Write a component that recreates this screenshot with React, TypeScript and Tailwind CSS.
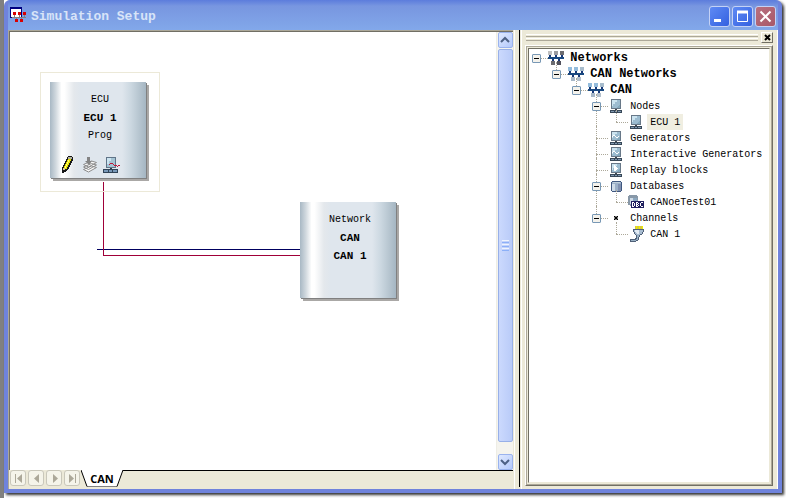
import type { ReactNode } from 'react';

type IconName = 'bus-dark' | 'bus' | 'node' | 'wave' | 'play' | 'database' | 'dbc' | 'dot' | 'plug';

interface TreeItem {
  label: string;
  icon: IconName;
  bold?: boolean;
  selected?: boolean;
  children?: TreeItem[];
}

const TREE: TreeItem[] = [
  {
    label: 'Networks',
    icon: 'bus-dark',
    bold: true,
    children: [
      {
        label: 'CAN Networks',
        icon: 'bus',
        bold: true,
        children: [
          {
            label: 'CAN',
            icon: 'bus',
            bold: true,
            children: [
              { label: 'Nodes', icon: 'node', children: [{ label: 'ECU 1', icon: 'node', selected: true }] },
              { label: 'Generators', icon: 'wave' },
              { label: 'Interactive Generators', icon: 'wave' },
              { label: 'Replay blocks', icon: 'play' },
              { label: 'Databases', icon: 'database', children: [{ label: 'CANoeTest01', icon: 'dbc' }] },
              { label: 'Channels', icon: 'dot', children: [{ label: 'CAN 1', icon: 'plug' }] },
            ],
          },
        ],
      },
    ],
  },
];

function BusIcon({ dark = false }: { dark?: boolean }) {
  const top = dark ? ['#c0c0c0', '#9c9ca0', '#6c6c70'] : ['#94bcdc', '#94bcdc', '#a8bccc'];
  const bottom = dark ? ['#6c6c70', '#50505c'] : ['#a8b8c8', '#b4c0cc'];
  return (
    <>
      <path d="M1 5h2v2H1zM7 5h2v2H7zM13 5h2v2h-2z" fill="#183878" />
      <path d="M0 7h16v2H0z" fill="#184880" />
      <path d="M4 9h2v2H4zM10 9h2v2h-2z" fill="#183878" />
      <path d="M0 1h4v4H0z" fill={top[0]} />
      <path d="M6 1h4v4H6z" fill={top[1]} />
      <path d="M12 1h4v4h-4z" fill={top[2]} />
      <path d="M3 11h4v4H3z" fill={bottom[0]} />
      <path d="M9 11h4v4H9z" fill={bottom[1]} />
    </>
  );
}

function Monitor({ children }: { children?: ReactNode }) {
  return (
    <>
      <path d="M3 1h10v10H3z" fill="#687888" />
      <path d="M4 2h8v8H4z" fill="#9cbcd0" />
      <path d="M4 2h5v2H7v2H5v2H4z" fill="#cce4f0" />
      <path d="M9 10h3V7h-1v1h-1v1H9z" fill="#84a8bc" />
      <path d="M7 11h2v2H7z" fill="#404850" />
      <path d="M2 12h12v3H2z" fill="#384858" />
      <path d="M3 13h3v1H3zM7 13h2v1H7zM10 13h3v1h-3z" fill="#8098b0" />
      {children}
    </>
  );
}

function TreeIcon({ name }: { name: IconName }) {
  return (
    <svg width="16" height="16" viewBox="0 0 16 16" fill="none" shapeRendering="crispEdges" className="shrink-0" aria-hidden="true">
      {name === 'bus-dark' && <BusIcon dark />}
      {name === 'bus' && <BusIcon />}
      {name === 'node' && <Monitor />}
      {name === 'wave' && (
        <Monitor>
          <path d="M4 6h1v1H4zM5 5h2v1H5zM7 6h1v1H7zM8 7h2v1H8zM10 6h1v1h-1z" fill="#fff" />
        </Monitor>
      )}
      {name === 'play' && (
        <Monitor>
          <path d="M6 3h1v1h1v1h1v1h1v1H9v1H8v1H6z" fill="#fff" />
        </Monitor>
      )}
      {name === 'database' && (
        <>
          <path d="M4 3h9v1h1v9h-1v1H4v-1H3V4h1z" fill="#405880" />
          <path d="M4 4h9v9H4z" fill="#9cb0c8" />
          <path d="M4 6h3v7H4z" fill="#d0dce8" />
          <path d="M10 6h3v7h-3z" fill="#8090b0" />
          <path d="M5 4h7v1H5z" fill="#c0d0dc" />
        </>
      )}
      {name === 'dbc' && (
        <>
          <path d="M1 1h8v1h1v9H9v1H2v-1H0V2h1z" fill="#8898a8" />
          <path d="M2 4h3v6H2z" fill="#d0dce8" />
          <path d="M5 4h4v6H5z" fill="#8ca8c0" />
          <path d="M3 7h13v7H3z" fill="#202060" />
          <path d="M4 8h2v1H5v3h1v1H4zM6 9h1v3H6z" fill="#fff" />
          <path d="M8 8h2v1H9v1h1v1H9v1h1v1H8zM10 9h1v1h-1zM10 11h1v1h-1z" fill="#fff" />
          <path d="M12 9h1v3h-1zM13 8h2v1h-2zM13 12h2v1h-2z" fill="#fff" />
        </>
      )}
      {name === 'dot' && (
        <>
          <path d="M6 6h4v4H6z" fill="#808080" />
          <path d="M6 6h1v1H6zM9 6h1v1H9zM7 7h2v2H7zM6 9h1v1H6zM9 9h1v1H9z" fill="#000" />
        </>
      )}
      {name === 'plug' && (
        <>
          <path d="M7 0h8v4H7z" fill="#d8c840" />
          <path d="M8 0h1v3H8zM11 0h1v3h-1zM14 0h1v3h-1z" fill="#f0f000" />
          <path d="M5 3h11v3h-1v2h-1v1h-2v2h-1v3h-1v1H8v1H2v-3h5v-1h1V9H7V8H6V6H5z" fill="#506078" />
          <path d="M6 4h9v2h-1v2h-2v1H8V8H7V6H6z" fill="#a8bcd0" />
          <path d="M7 4h4v4H9V7H8V6H7z" fill="#e4ecf4" />
          <path d="M3 14h5v-1h1V9h2v2h-1v3H8v1H3z" fill="#98b0c4" />
        </>
      )}
    </svg>
  );
}

function TreeRow({ item, depth, last }: { item: TreeItem; depth: number; last: boolean }) {
  const open = Boolean(item.children);
  return (
    <li className="relative">
      {/* Dotted branch lines */}
      {depth > 0 && (
        <span
          className={`absolute -top-1 left-1 w-0 border-l border-dotted border-[#aca899] ${last ? 'h-3' : 'h-full'}`}
        />
      )}
      <div className="flex h-4 items-center">
        <span className="relative flex w-4 shrink-0 items-center">
          <span className={`absolute right-0 border-t border-dotted border-[#aca899] ${open ? 'left-2' : 'left-1'}`} />
          {open && (
            <button
              aria-label={`Collapse ${item.label}`}
              className="relative flex size-[9px] items-center justify-center rounded-[1px] border border-[#7898b5] bg-[#f4f2ec]"
            >
              <span className="h-px w-[5px] bg-black" />
            </button>
          )}
        </span>
        <TreeIcon name={item.icon} />
        <span
          className={`ml-[3px] flex h-4 items-center whitespace-nowrap px-[3px] ${item.bold ? 'text-[12px] font-bold' : 'text-[10px]'} ${item.selected ? 'bg-[#f0eee1]' : ''}`}
        >
          {item.label}
        </span>
      </div>
      {item.children && (
        <ul className="ml-5">
          {item.children.map((child, i) => (
            <TreeRow key={child.label} item={child} depth={depth + 1} last={i === item.children!.length - 1} />
          ))}
        </ul>
      )}
    </li>
  );
}

const CARD =
  'absolute flex size-24 flex-col bg-[linear-gradient(90deg,#a8b8c4_0%,#d0d8de_6%,#fff_12%,#fff_15%,#e4e8ec_25%,#dfe6ed_32%,#dfe6ed_75%,#ccd8e1_84%,#a5b6c2_100%)] shadow-[1px_1px_0_#808080,3px_3px_0_#aaa8a6] pt-[9px] text-[10px] leading-[18px]';

interface CardLine {
  text: string;
  bold?: boolean;
}

function CardLines({ lines }: { lines: CardLine[] }) {
  return lines.map(line => (
    <span key={line.text} className={`pl-1 text-center ${line.bold ? 'text-[11px] font-bold' : ''}`}>
      {line.text}
    </span>
  ));
}

function CardIcons() {
  return (
    <div className="mt-auto mb-1 flex items-end gap-1.5 pl-2" aria-hidden="true">
      <svg width="16" height="18" viewBox="0 0 16 18" shapeRendering="crispEdges">
        <path d="M10 0h4v1h1v4h-1v2h-1v2h-1v2h-1v2h-1v1H9v1H8v1H6v1H4v-6h1V9h1V7h1V5h1V3h1V1h1z" fill="#181818" />
        <path d="M10 3h3v2h-1v2h-1v2h-1v2H9v2H7v-1H6v-2h1V8h1V6h1V4h1z" fill="#e8e000" />
        <path d="M10 4h1v2h-1v2H9v2H8v2H7v-2h1V8h1V6h1z" fill="#ffff70" />
        <path d="M10 1h4v2h-4z" fill="#b0b0a0" />
        <path d="M5 12h2v2H5z" fill="#d8c8a0" />
      </svg>
      <svg width="18" height="18" viewBox="0 0 18 18" fill="none" className="-mr-0.5">
        <path
          d="M3.500 13.500l8-3.500 5 1.500-8 4.500zM3.500 11l8-3.500 5 1.500-8 4.500zM3.500 8.500l8-3.500 5 1.500-8 4.500z"
          fill="#f8f8f8"
          stroke="#8c8c8c"
        />
        <path d="M7 1h3v4h2l-3 4-4-4h2z" fill="#848484" />
      </svg>
      <svg width="18" height="18" viewBox="0 0 18 18" fill="none" shapeRendering="crispEdges">
        <path d="M4 1h10v11H4z" fill="#607488" />
        <path d="M5 2h8v9H5z" fill="#a4c4d4" />
        <path d="M5 2h4v3H7v3H5z" fill="#cce4f0" />
        <path d="M8 12h2v2H8z" fill="#303840" />
        <path d="M1 13h15v4H1z" fill="#304458" />
        <path d="M2 14h4v2H2zM7 14h3v2H7zM11 14h4v2h-4z" fill="#7898b8" />
        <path d="M7 8h1v1H7zM8 7h3v1H8zM11 8h1v1h-1zM12 9h3v1h-3zM15 10h1v1h-1zM16 9h2v1h-2z" fill="#c01838" />
      </svg>
    </div>
  );
}

const NAV_BUTTONS = [
  { label: 'First tab', d: 'M4 3h1v9H4zM11 3v9L6 7.500z' },
  { label: 'Previous tab', d: 'M10 3v9L5 7.500z' },
  { label: 'Next tab', d: 'M6 3v9l5-4.500z' },
  { label: 'Last tab', d: 'M4 3v9l5-4.500zM10 3h1v9h-1z' },
];

function SheetTabs() {
  return (
    <div className="flex h-[18px] shrink-0 items-stretch bg-[#ece9d8]">
      <div className="flex gap-0.5 px-px">
        {NAV_BUTTONS.map(b => (
          <button
            key={b.label}
            aria-label={b.label}
            className="flex size-4 items-center justify-center rounded-[3px] border border-[#c9c7ba] bg-[#f5f4ea]"
          >
            <svg width="15" height="15" viewBox="0 0 15 15" fill="#aca899" className="shrink-0">
              <path d={b.d} />
            </svg>
          </button>
        ))}
      </div>
      <button className="relative w-[42px] font-['Open_Sans',sans-serif] text-[11px] leading-4 font-bold">
        <svg width="42" height="17" viewBox="0 0 42 17" className="absolute left-0 top-0" fill="none" aria-hidden="true">
          <path d="M0 0L6 16.500H36L42 0z" fill="#fff" />
          <path d="M6 16.500H36" stroke="#808080" />
          <path d="M0 0L6 16.500M36 16.500L42 0" stroke="#000" />
        </svg>
        <span className="relative">CAN</span>
      </button>
      <div className="flex-1 border-t border-black" />
    </div>
  );
}

function ScrollButton({ label, d }: { label: string; d: string }) {
  return (
    <button
      aria-label={label}
      className="flex h-4 w-[15px] shrink-0 items-center justify-center rounded-[2px] border border-[#9ab3ee] bg-linear-to-br from-[#dfe9ff] to-[#b4c9fb]"
    >
      <svg width="10" height="8" viewBox="0 0 10 8" fill="none" stroke="#4d6185" strokeWidth="2">
        <path d={d} />
      </svg>
    </button>
  );
}

function TitleButton({ label, className, children }: { label: string; className: string; children: ReactNode }) {
  return (
    <button
      aria-label={label}
      className={`flex size-[21px] items-center justify-center rounded-[3px] border border-[#c4d2f6] ${className}`}
    >
      <svg width="19" height="19" viewBox="0 0 19 19" fill="none" stroke="#fff" className="shrink-0">
        {children}
      </svg>
    </button>
  );
}

export default function App() {
  return (
    <div className="flex min-h-screen border-l-4 border-[#808080] bg-white pr-1 pb-[5px] font-['Liberation_Mono',monospace] text-black">
      <div className="flex min-w-0 flex-1 flex-col rounded-t-[6px] border-x-4 border-b-4 border-[#6f83dc] bg-[#7b98e0] shadow-[2px_2px_3px_#303030]">
        {/* Title bar */}
        <header className="flex h-[30px] shrink-0 items-center rounded-t-[3px] bg-linear-to-b from-[#5c7cdc] via-[#7896e0] via-20% to-[#82a8ea] pt-0.5 pr-0.5">
          <svg width="18" height="18" viewBox="0 0 18 18" shapeRendering="crispEdges" className="ml-0.5" aria-hidden="true">
            <path d="M0 0h12v11H0z" fill="#000080" />
            <path d="M1 2h10v8H1z" fill="#fff" />
            <path d="M2 10h14v1H2zM4 8h1v2H4zM9 8h1v2H9zM14 8h1v2h-1zM6 11h1v2H6zM11 11h1v2h-1z" fill="#808080" />
            <path d="M3 5h3v3H3zM8 5h3v3H8zM13 5h3v3h-3zM5 12h3v3H5zM10 12h3v3h-3z" fill="#d80000" />
          </svg>
          <h1 className="ml-[3px] flex-1 pt-0.5 text-[13px] font-bold text-[#d8e4f8]">Simulation Setup</h1>
          <div className="flex gap-0.5">
            <TitleButton label="Minimize" className="bg-linear-to-br from-[#5f8af4] to-[#3460e0]">
              <path d="M4 13.500h7" strokeWidth="3" />
            </TitleButton>
            <TitleButton label="Maximize" className="bg-linear-to-br from-[#5f8af4] to-[#3460e0]">
              <path d="M4.500 5v9.500h10V5" />
              <path d="M4 5h11" strokeWidth="3" />
            </TitleButton>
            <TitleButton label="Close" className="bg-linear-to-br from-[#b87080] to-[#a85868]">
              <path d="M4.500 4.500l10 10M14.500 4.500l-10 10" strokeWidth="2" />
            </TitleButton>
          </div>
        </header>

        <main className="flex flex-1 bg-[#ece9d8]">
          {/* Simulation canvas */}
          <section className="flex min-w-0 flex-1 flex-col border-t border-l border-[#aca899] pb-px">
            <div className="flex flex-1 border-t border-l border-[#716f64] bg-white">
              <div className="relative flex-1 overflow-hidden">
                <svg className="absolute inset-0 size-full" fill="none" shapeRendering="crispEdges" aria-hidden="true">
                  <path d="M87 217.500H290" stroke="#000060" />
                  <path d="M93.500 150V223.500H290" stroke="#a00038" />
                </svg>
                <div className="absolute left-[30px] top-10 size-[120px] border border-[#ece9d8]" />
                <div className={`${CARD} left-10 top-[50px]`}>
                  <CardLines lines={[{ text: 'ECU' }, { text: 'ECU 1', bold: true }, { text: 'Prog' }]} />
                  <CardIcons />
                </div>
                <div className={`${CARD} left-[290px] top-[170px]`}>
                  <CardLines lines={[{ text: 'Network' }, { text: 'CAN', bold: true }, { text: 'CAN 1', bold: true }]} />
                </div>
              </div>
              {/* Vertical scrollbar */}
              <div className="flex w-[17px] shrink-0 flex-col items-center gap-px border-l border-[#eeede5] bg-[#f5f4ee]">
                <ScrollButton label="Scroll up" d="M1 6l4-4 4 4" />
                <div className="flex w-[15px] flex-1 flex-col items-center justify-center gap-px rounded-[2px] border border-[#98b0e8] bg-linear-to-r from-[#cbd9fd] to-[#b9cbf8]">
                  <span className="h-px w-[7px] bg-[#eef4fe]" />
                  <span className="h-px w-[7px] bg-[#8cb0f8]" />
                  <span className="h-px w-[7px] bg-[#eef4fe]" />
                  <span className="h-px w-[7px] bg-[#8cb0f8]" />
                  <span className="h-px w-[7px] bg-[#eef4fe]" />
                  <span className="h-px w-[7px] bg-[#8cb0f8]" />
                </div>
                <div className="h-2.5 shrink-0" />
                <ScrollButton label="Scroll down" d="M1 2l4 4 4-4" />
              </div>
            </div>
            <SheetTabs />
          </section>

          <div className="mr-px ml-px flex w-1.5 justify-end border-l border-white pb-0.5">
            <span className="w-px bg-black" />
          </div>

          {/* Network tree */}
          <aside className="flex w-1/3 shrink-0 flex-col border-r border-l border-white pr-1 pb-[3px] pl-[3px]">
            <div className="flex h-[15px] shrink-0 items-center gap-[3px] pl-px">
              <div className="flex flex-1 flex-col gap-px">
                <span className="h-[3px] border-t border-b border-t-white border-b-[#aca899]" />
                <span className="h-[3px] border-t border-b border-t-white border-b-[#aca899]" />
              </div>
              <button
                aria-label="Close panel"
                className="flex h-[11px] w-3 items-center justify-center border border-t-white border-r-[#716f64] border-b-[#716f64] border-l-white"
              >
                <svg width="7" height="7" viewBox="0 0 7 7" fill="none" stroke="#000" strokeWidth="2">
                  <path d="M1 1l5 5M6 1L1 6" />
                </svg>
              </button>
            </div>
            <div className="flex flex-1 border border-t-white border-r-[#716f64] border-b-[#716f64] border-l-white">
              <div className="flex flex-1 border border-[#aca899] p-px">
                <ul className="flex-1 border border-t-[#716f64] border-r-[#ece9d8] border-b-[#ece9d8] border-l-[#716f64] bg-white pt-px pl-[3px]">
                  {TREE.map(item => (
                    <TreeRow key={item.label} item={item} depth={0} last />
                  ))}
                </ul>
              </div>
            </div>
          </aside>
        </main>
      </div>
    </div>
  );
}
